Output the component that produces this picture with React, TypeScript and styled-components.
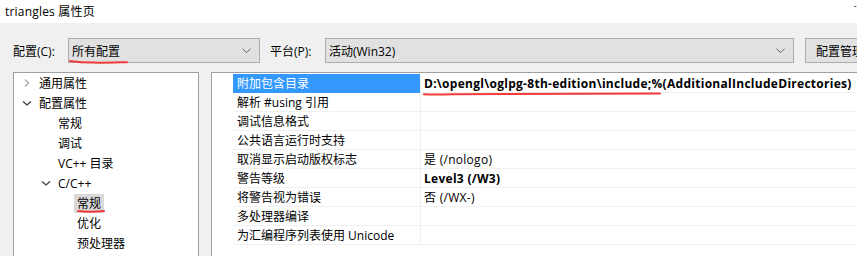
import React from 'react'
import styled, { createGlobalStyle } from 'styled-components'

const GlobalStyle = createGlobalStyle`
  html, body {
    margin: 0;
    padding: 0;
    background: #f0f0f0;
  }
  body {
    font-family: "Open Sans", "Noto Sans CJK SC", sans-serif;
    font-size: 12px;
    color: #000;
  }
`

type TreeNode = {
  label: string;
  level: number;
  chevron?: 'closed' | 'open';
  selected?: boolean;
  marked?: boolean;
}

type Prop = {
  name: string;
  value?: string;
  bold?: boolean;
  selected?: boolean;
  marked?: boolean;
}

const tree: TreeNode[] = [
  { label: '通用属性', level: 0, chevron: 'closed' },
  { label: '配置属性', level: 0, chevron: 'open' },
  { label: '常规', level: 1 },
  { label: '调试', level: 1 },
  { label: 'VC++ 目录', level: 1 },
  { label: 'C/C++', level: 1, chevron: 'open' },
  { label: '常规', level: 2, selected: true, marked: true },
  { label: '优化', level: 2 },
  { label: '预处理器', level: 2 },
]

const props: Prop[] = [
  { name: '附加包含目录', value: 'D:\\opengl\\oglpg-8th-edition\\include;%(AdditionalIncludeDirectories)', bold: true, selected: true, marked: true },
  { name: '解析 #using 引用' },
  { name: '调试信息格式' },
  { name: '公共语言运行时支持' },
  { name: '取消显示启动版权标志', value: '是 (/nologo)' },
  { name: '警告等级', value: 'Level3 (/W3)', bold: true },
  { name: '将警告视为错误', value: '否 (/WX-)' },
  { name: '多处理器编译' },
  { name: '为汇编程序列表使用 Unicode' },
]

function Chevron({ kind }: { kind: 'closed' | 'open' }): React.ReactElement {
  return kind === 'closed' ? (
    <ChevronSvg width="10" height="10" viewBox="0 0 10 10">
      <path d="M3 1.5 L6.5 5 L3 8.5" fill="none" stroke="#a6a6a6" strokeWidth="1.3" />
    </ChevronSvg>
  ) : (
    <ChevronSvg width="10" height="10" viewBox="0 0 10 10">
      <path d="M1 3.5 L5 7 L9 3.5" fill="none" stroke="#404040" strokeWidth="1.3" />
    </ChevronSvg>
  )
}

function DropArrow(): React.ReactElement {
  return (
    <ArrowSvg width="9" height="6" viewBox="0 0 9 6">
      <path d="M0.5 0.8 L4.5 4.6 L8.5 0.8" fill="none" stroke="#606060" strokeWidth="1" />
    </ArrowSvg>
  )
}

export default function App(): React.ReactElement {
  return (
    <Window>
      <GlobalStyle />
      <TitleBar>
        triangles 属性页
        <CloseMark>-</CloseMark>
      </TitleBar>
      <Body>
        <ConfigRow>
          <Label>配置(C):</Label>
          <Select width={192}>
            <SelectText>所有配置</SelectText>
            <Scribble width="60" height="6" viewBox="0 0 60 6" style={{ left: 0, top: 20 }}>
              <path d="M1 2 C8 3 14 3.5 24 3.6 C36 3.8 48 3.4 58 3.2" />
            </Scribble>
            <DropArrow />
          </Select>
          <Label>平台(P):</Label>
          <Select width={469}>
            <SelectText>活动(Win32)</SelectText>
            <DropArrow />
          </Select>
          <Button>配置管理器(O)...</Button>
        </ConfigRow>
        <Main>
          <TreePanel>
            {tree.map((n, i) => (
              <TreeRow key={i} level={n.level}>
                <ChevronSlot>{n.chevron && <Chevron kind={n.chevron} />}</ChevronSlot>
                <TreeLabel selected={n.selected}>
                  {n.label}
                  {n.marked && (
                    <Scribble width="28" height="5" viewBox="0 0 28 5" style={{ left: 3, top: 15 }}>
                      <path d="M1 2 C8 3 18 3 27 2" />
                    </Scribble>
                  )}
                </TreeLabel>
              </TreeRow>
            ))}
          </TreePanel>
          <GridPanel>
            {props.map((p, i) => (
              <GridRow key={i}>
                <Gutter />
                <NameCell selected={p.selected}>{p.name}</NameCell>
                <ValueCell bold={p.bold}>
                  {p.value}
                  {p.marked && (
                    <Scribble width="240" height="6" viewBox="0 0 240 6" style={{ left: 2, top: 17 }}>
                      <path d="M1 3.2 C10 4 20 3.6 30 3.2 C90 2.8 170 2.9 237 2.6" />
                    </Scribble>
                  )}
                </ValueCell>
              </GridRow>
            ))}
          </GridPanel>
        </Main>
      </Body>
    </Window>
  )
}

const Window = styled.div`
  width: 857px;
  height: 256px;
  overflow: hidden;
  display: flex;
  flex-direction: column;
`
const TitleBar = styled.div`
  position: relative;
  height: 23px;
  flex: none;
  background: #fff;
  display: flex;
  align-items: center;
  padding-left: 5px;
  padding-bottom: 1px;
  box-sizing: border-box;
  letter-spacing: 0.2px;
`
const CloseMark = styled.span`
  position: absolute;
  right: 0;
  top: 0;
  font-size: 10px;
  line-height: 10px;
  color: #333;
`
const Body = styled.div`
  flex: 1;
  background: #f0f0f0;
  display: flex;
  flex-direction: column;
  padding: 15px 0 0 13px;
  min-height: 0;
`
const ConfigRow = styled.div`
  display: flex;
  align-items: center;
  height: 25px;
  flex: none;
`
const Label = styled.span`
  white-space: nowrap;
  width: 55px;
  flex: none;
  &:nth-of-type(2) {
    margin-left: 10px;
  }
`
const Select = styled.div<{ width: number }>`
  position: relative;
  width: ${({ width }) => width}px;
  height: 25px;
  flex: none;
  box-sizing: border-box;
  border: 1px solid #adadad;
  background: #e1e1e1;
  display: flex;
  align-items: center;
  justify-content: space-between;
  padding: 0 8px 0 3px;
`
const SelectText = styled.span`
  white-space: nowrap;
`
const ArrowSvg = styled.svg`
  display: block;
  flex: none;
`
const Button = styled.div`
  margin-left: 11px;
  height: 25px;
  flex: none;
  box-sizing: border-box;
  border: 1px solid #adadad;
  background: #e1e1e1;
  display: flex;
  align-items: center;
  padding: 0 10px;
  white-space: nowrap;
`
const Main = styled.div`
  display: flex;
  gap: 12px;
  margin-top: 9px;
  flex: 1;
  min-height: 0;
`
const TreePanel = styled.div`
  width: 186px;
  flex: none;
  box-sizing: border-box;
  border: 1px solid #a0a0a0;
  border-bottom: none;
  background: #fff;
`
const TreeRow = styled.div<{ level: number }>`
  height: 20px;
  display: flex;
  align-items: center;
  padding-left: ${({ level }) => 8 + level * 19}px;
`
const ChevronSlot = styled.div`
  width: 17px;
  height: 20px;
  flex: none;
  display: flex;
  align-items: center;
`
const ChevronSvg = styled.svg`
  display: block;
`
const TreeLabel = styled.span<{ selected?: boolean }>`
  position: relative;
  white-space: nowrap;
  line-height: 19px;
  padding: 0 3px;
  margin-left: -3px;
  background: ${({ selected }) => (selected ? '#d9d9d9' : 'transparent')};
`
const GridPanel = styled.div`
  flex: 1;
  box-sizing: border-box;
  border: 1px solid #a0a0a0;
  border-right: none;
  border-bottom: none;
  background: #fff;
  min-width: 0;
  padding-top: 1px;
`
const GridRow = styled.div`
  display: flex;
  height: 19px;
`
const Gutter = styled.div`
  width: 21px;
  flex: none;
`
const NameCell = styled.div<{ selected?: boolean }>`
  width: 187px;
  flex: none;
  box-sizing: border-box;
  padding-left: 4px;
  display: flex;
  align-items: center;
  white-space: nowrap;
  color: ${({ selected }) => (selected ? '#fff' : '#000')};
  background: ${({ selected }) => (selected ? '#3399ff' : '#fff')};
  border-bottom: 1px solid ${({ selected }) => (selected ? '#3399ff' : '#f0f0f0')};
`
const ValueCell = styled.div<{ bold?: boolean }>`
  position: relative;
  flex: 1;
  min-width: 0;
  box-sizing: border-box;
  padding-left: 3px;
  display: flex;
  align-items: center;
  white-space: nowrap;
  letter-spacing: 0.28px;
  font-weight: ${({ bold }) => (bold ? 700 : 400)};
  border-left: 1px solid #f0f0f0;
  border-bottom: 1px solid #f0f0f0;
`
const Scribble = styled.svg`
  position: absolute;
  overflow: visible;
  pointer-events: none;
  path {
    fill: none;
    stroke: #f23a3a;
    stroke-width: 2;
    stroke-linecap: round;
  }
`
